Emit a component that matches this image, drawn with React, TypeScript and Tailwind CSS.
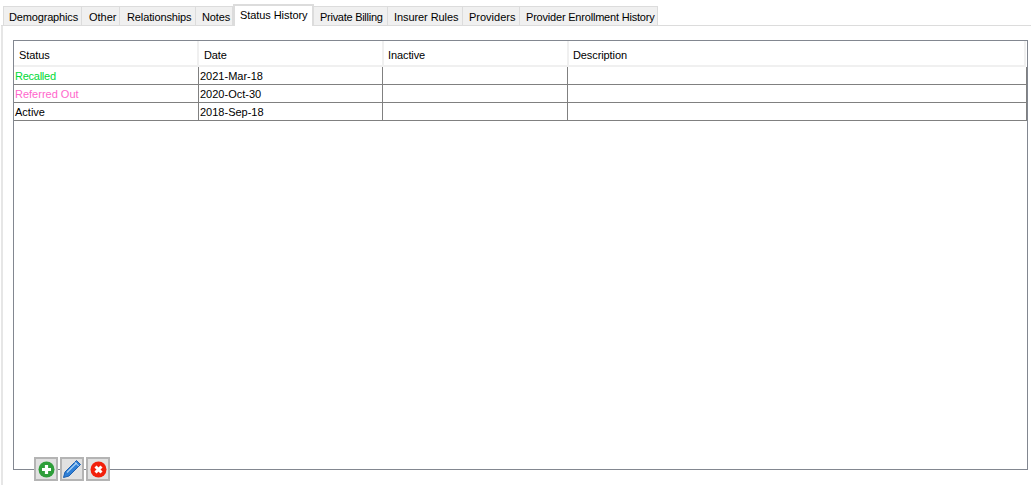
const tabs = [
  { name: 'Demographics', w: 'w-[79px]', track: 'pl-[5px] tracking-[-0.16px]' },
  { name: 'Other', w: 'w-[38px]', track: 'pl-[7px]' },
  { name: 'Relationships', w: 'w-[76px]', track: 'pl-[7px] tracking-[-0.12px]' },
  { name: 'Notes', w: 'w-[37px]', track: 'pl-[6px] tracking-[-0.1px]' },
  { name: 'Status History', w: 'w-[81px]', track: 'pl-[5px] tracking-[-0.07px]', active: true },
  { name: 'Private Billing', w: 'w-[74px]', track: 'pl-[6px] tracking-[-0.27px]' },
  { name: 'Insurer Rules', w: 'w-[75px]', track: 'pl-[6px] tracking-[-0.08px]' },
  { name: 'Providers', w: 'w-[57px]', track: 'pl-[6px]' },
  { name: 'Provider Enrollment History', w: 'w-[138px]', track: 'pl-[6px] tracking-[-0.2px]' },
]

const headers = [
  { name: 'Status', pad: 'pl-[5px]' },
  { name: 'Date', pad: 'pl-[5px]' },
  { name: 'Inactive', pad: 'pl-[4px]' },
  { name: 'Description', pad: 'pl-[4px]' },
]

const rows = [
  { status: 'Recalled', date: '2021-Mar-18', color: 'text-[#00d936] tracking-[-0.25px]' },
  { status: 'Referred Out', date: '2020-Oct-30', color: 'text-[#ff66cc]' },
  { status: 'Active', date: '2018-Sep-18', color: 'text-black' },
]

const cols = 'grid grid-cols-[184px_184px_185px_1fr]'

function Tabs() {
  return (
    <div className="ml-px flex h-[26px] items-end border-b border-[#dcdcdc] pl-[2px]">
      {tabs.map((t) =>
        t.active ? (
          <div
            key={t.name}
            className={`${t.w} ${t.track} -mb-px h-[22px] shrink-0 border-x-2 border-t-2 border-[#dcdcdc] bg-white pt-[4px]`}
          >
            {t.name}
          </div>
        ) : (
          <div
            key={t.name}
            className={`${t.w} ${t.track} flex h-[19px] shrink-0 items-center border-r border-t border-[#dcdcdc] bg-[#f0f0f0] pt-[2px] first:border-l`}
          >
            {t.name}
          </div>
        ),
      )}
    </div>
  )
}

function StatusTable() {
  return (
    <div className="h-[430px] border border-[#828790] bg-white">
      <div className="mr-px grid h-[26px] grid-cols-[185px_185px_185px_1fr] border-b-2 border-[#f0f0f0]">
        {headers.map((h) => (
          <div
            key={h.name}
            className={`flex items-center border-r-2 border-[#f0f0f0] pt-[4px] tracking-[-0.1px] ${h.pad}`}
          >
            {h.name}
          </div>
        ))}
      </div>
      {rows.map((r) => (
        <div key={r.date} className={`${cols} h-[18px] border-b border-r border-[#808080]`}>
          <div className={`flex items-center pl-[1px] pt-[2px] ${r.color}`}>{r.status}</div>
          <div className="flex items-center border-l border-[#808080] pl-[1px] pt-[2px]">{r.date}</div>
          <div className="border-l border-[#808080]" />
          <div className="border-l border-[#808080]" />
        </div>
      ))}
    </div>
  )
}

function ToolButton({ children }: { children: React.ReactNode }) {
  return (
    <button className="flex h-[24px] w-[24px] items-center justify-center border-2 border-[#b4b4b4] bg-[#e1e1e1]">
      {children}
    </button>
  )
}

export default function App() {
  return (
    <div className="h-[485px] w-[1031px] overflow-hidden bg-white font-['Liberation_Sans',sans-serif] text-[11px] leading-none text-black">
      <Tabs />
      <div className="relative ml-px h-[459px] border-l-2 border-[#e6e6e6] pl-[10px] pr-[3px] pt-[14px]">
        <StatusTable />
        <div className="absolute left-[31px] top-[431px] flex gap-[2px]">
          <ToolButton>
            <svg width="17" height="17" viewBox="0 0 17 17">
              <circle cx="8.500" cy="8.500" r="8" fill="#2e9e3a" />
              <path d="M8.500 4v9M4 8.500h9" stroke="#fff" strokeWidth="3.200" />
            </svg>
          </ToolButton>
          <ToolButton>
            <svg width="20" height="20" viewBox="0 0 20 20">
              <path d="M1.500 18.500l1.500-5.500L14.500 1.500l4 4L7 17z" fill="#2f7fd6" stroke="#1b5fb0" strokeWidth="1" />
              <path d="M5 13.500l9.500-9.500" stroke="#a9d2f5" strokeWidth="1.200" />
              <path d="M12.800 3.200l4 4" stroke="#cfe6fa" strokeWidth="1" />
            </svg>
          </ToolButton>
          <ToolButton>
            <svg width="17" height="17" viewBox="0 0 17 17">
              <circle cx="8.500" cy="8.500" r="8" fill="#f2200c" />
              <path d="M5.500 5.500l6 6M11.500 5.500l-6 6" stroke="#fff" strokeWidth="3" />
            </svg>
          </ToolButton>
        </div>
      </div>
    </div>
  )
}
